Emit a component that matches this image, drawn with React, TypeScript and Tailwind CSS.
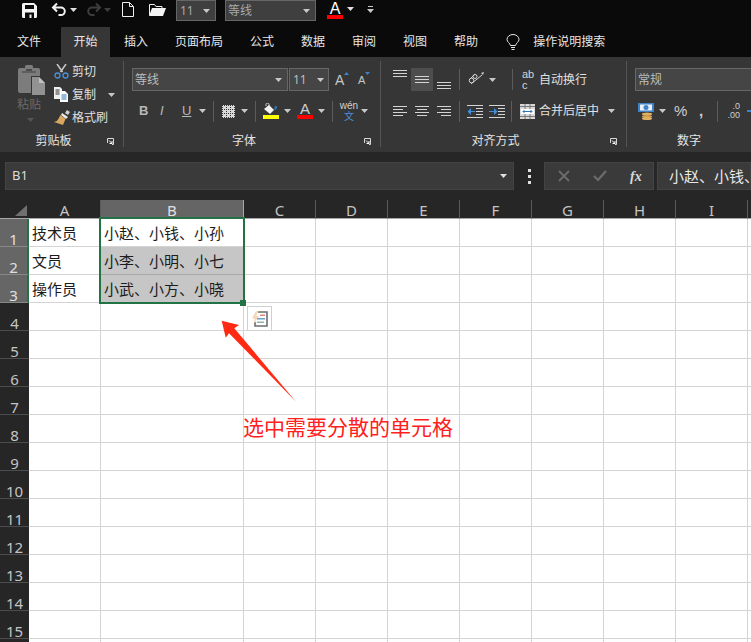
import { Fragment, type ReactNode } from 'react'

const cjk = "font-['Noto_Sans','Noto_Sans_CJK_SC',sans-serif]"

function Caret({ className = '', color = '#c8c8c8' }: { className?: string; color?: string }) {
  return (
    <svg width="7" height="4" viewBox="0 0 7 4" className={'shrink-0 ' + className}>
      <path d="M0 0h7L3.5 4z" fill={color} />
    </svg>
  )
}

function Sep({ className = '' }: { className?: string }) {
  return <div className={'w-px h-[21px] bg-[#5c5c5c] shrink-0 ' + className} />
}

function Launcher() {
  return (
    <svg width="7" height="7" viewBox="0 0 7 7" className="shrink-0">
      <path d="M.5 5V.5H6.5V6.5H5" fill="none" stroke="#d8d8d8" />
      <path d="M2 2.5L5 5.500M5 3v2.500H2.500" fill="none" stroke="#fff" />
    </svg>
  )
}

function Lines({ rows, className = '' }: { rows: number[][]; className?: string }) {
  return (
    <svg width="16" height="14" viewBox="0 0 16 14" className={'shrink-0 ' + className}>
      {rows.map((r, i) => (
        <rect key={i} x={r[0]} y={r[2]} width={r[1] - r[0]} height="1" fill="#d4d4d4" />
      ))}
    </svg>
  )
}

function SaveIcon() {
  return (
    <svg width="15" height="15" viewBox="0 0 15 15" className="shrink-0">
      <path d="M0 1.500A1.500 1.500 0 0 1 1.500 0H12l3 3v10.500a1.500 1.500 0 0 1-1.500 1.500h-12A1.500 1.500 0 0 1 0 13.500z" fill="#f4f4f4" />
      <rect x="3" y="2" width="9" height="4" fill="#0a0a0a" />
      <path d="M3 15V9.500h9V15h-2.500v-3.500h-2V15z" fill="#0a0a0a" />
    </svg>
  )
}

function UndoIcon({ color, flip = false }: { color: string; flip?: boolean }) {
  return (
    <svg width="16" height="15" viewBox="0 0 16 15" className={flip ? 'shrink-0 -scale-x-100' : 'shrink-0'}>
      <path d="M6 1.500L2 5.500l4 4M2 5.500h8a3.800 3.800 0 0 1 0 7.600H7.500" fill="none" stroke={color} strokeWidth="2" />
    </svg>
  )
}

function PasteIcon() {
  return (
    <svg width="28" height="30" viewBox="0 0 28 30" className="shrink-0">
      <path d="M1 5a2 2 0 0 1 2-2h5V1.500A1.500 1.500 0 0 1 9.500 0h5A1.500 1.500 0 0 1 16 1.500V3h5a2 2 0 0 1 2 2v6H14v17H3a2 2 0 0 1-2-2z" fill="#7c7c7c" />
      <rect x="9" y="4" width="6" height="2" fill="#4c4c4c" />
      <rect x="5" y="6" width="14" height="2" fill="#5e5e5e" />
      <path d="M15 12h7l6 6v12H15z" fill="#929292" />
      <path d="M22 12v6h6z" fill="#c0c0c0" />
    </svg>
  )
}

function CutIcon() {
  return (
    <svg width="15" height="15" viewBox="0 0 15 15" className="shrink-0">
      <path d="M3 0l5.500 8M12 0L6.500 8" stroke="#c8c8c8" strokeWidth="1.500" fill="none" />
      <circle cx="3.500" cy="11.500" r="2.500" fill="none" stroke="#4a90d9" strokeWidth="1.300" />
      <circle cx="11.500" cy="11.500" r="2.500" fill="none" stroke="#4a90d9" strokeWidth="1.300" />
    </svg>
  )
}

function CopyIcon() {
  return (
    <svg width="15" height="15" viewBox="0 0 15 15" className="shrink-0">
      <path d="M0 0h6l2 2v10H0z" fill="#f0f0f0" />
      <path d="M1.500 3h4M1.500 5h4M1.500 7h4" stroke="#333" />
      <path d="M6 4h5l3 3v8H6z" fill="#fff" />
      <path d="M7.500 8h5M7.500 10h5M7.500 12h5" stroke="#2f75b5" />
    </svg>
  )
}

function BrushIcon() {
  return (
    <svg width="16" height="15" viewBox="0 0 16 15" className="shrink-0">
      <path d="M11 3l2-3 3 2-2 3z" fill="#d0d0d0" />
      <path d="M8 3l6 4-2 2-5-4z" fill="#eaeaea" />
      <path d="M6.500 5l5 4L9 15 0 12c2-.5 3-1 4-2.500z" fill="#d9a760" />
    </svg>
  )
}

function BorderIcon() {
  return (
    <svg width="13" height="13" viewBox="0 0 13 13" className="shrink-0">
      <rect width="13" height="13" fill="#d8d8d8" />
      <path d="M.5 0v13M4.500 0v13M8.500 0v13M12.500 0v13M0 .5h13M0 4.500h13M0 8.500h13M0 12.500h13" stroke="#363636" strokeDasharray="1 1" />
    </svg>
  )
}

function FillIcon() {
  return (
    <div className="flex flex-col items-center w-[16px] shrink-0">
      <svg width="16" height="12" viewBox="0 0 16 12">
        <path d="M3 3V1.500a1.500 1.500 0 0 1 3 0V3" fill="none" stroke="#d0d0d0" />
        <path d="M1 6l5-4 5 5-4 4z" fill="#f2f2f2" />
        <path d="M11.500 7V4.500C11.500 3 13.500 2 14 3.500c.5 1.500-1 2.500-1.500 3.500z" fill="#2f75b5" />
      </svg>
      <div className="w-[16px] h-[4px] bg-[#ffff00]" />
    </div>
  )
}

function FontColor({ textSize = 'text-[15px] text-[#d0d0d0]' }: { textSize?: string }) {
  return (
    <div className="flex flex-col items-center w-[16px] shrink-0">
      <span className={textSize + " leading-[12px] h-[12px] font-['Liberation_Sans',sans-serif]"}>A</span>
      <div className="w-[16px] h-[4px] bg-[#ff0000]" />
    </div>
  )
}

function OrientIcon() {
  return (
    <svg width="17" height="15" viewBox="0 0 17 15" className="shrink-0">
      <path d="M1 8l6-6M3 12l11-9" stroke="#d4d4d4" fill="none" />
      <path d="M13 1l3-1-1 3z" fill="#d4d4d4" />
      <circle cx="3.500" cy="8.500" r="2.300" fill="none" stroke="#d4d4d4" />
      <circle cx="7" cy="4.500" r="2" fill="none" stroke="#d4d4d4" />
    </svg>
  )
}

function IndentIcon({ right = false }: { right?: boolean }) {
  return (
    <svg width="16" height="13" viewBox="0 0 16 13" className="shrink-0">
      {[0, 12].map((y) => (
        <rect key={y} x="0" y={y} width="16" height="1" fill="#d4d4d4" />
      ))}
      {[3, 6, 9].map((y) => (
        <rect key={y} x="9" y={y} width="7" height="1" fill="#d4d4d4" />
      ))}
      {right ? (
        <path d="M0 6h5V3l3.500 3.500L5 10V7H0z" fill="#3f8fdc" />
      ) : (
        <path d="M8 6H4V3L.5 6.500 4 10V7h4z" fill="#3f8fdc" />
      )}
    </svg>
  )
}

function MergeIcon() {
  return (
    <svg width="15" height="15" viewBox="0 0 15 15" className="shrink-0">
      <rect width="15" height="15" fill="#d8d8d8" />
      <rect x="1" y="5" width="13" height="5" fill="#fff" />
      <path d="M0 2.500h15M0 12.500h15M5 0v5M10 0v5M5 10v5M10 10v5" stroke="#777" />
      <path d="M3 7.500h9M4.500 6L3 7.500 4.500 9M10.500 6L12 7.500 10.500 9" stroke="#2f75b5" fill="none" />
    </svg>
  )
}

function CurrencyIcon() {
  return (
    <svg width="16" height="17" viewBox="0 0 16 17" className="shrink-0">
      <rect width="16" height="9" fill="#3f82c9" />
      <rect x="2" y="1.500" width="12" height="6" fill="#e8f0f8" />
      <circle cx="8" cy="4.500" r="2.500" fill="#3f82c9" />
      <ellipse cx="9" cy="11" rx="5" ry="1.500" fill="#e0b060" />
      <ellipse cx="9" cy="13.500" rx="5" ry="1.500" fill="#d4a050" />
      <ellipse cx="9" cy="15.500" rx="5" ry="1.500" fill="#e0b060" />
    </svg>
  )
}

function FlashIcon() {
  return (
    <svg width="16" height="16" viewBox="0 0 16 16">
      <path d="M6 1h9v14H3v-4" fill="none" stroke="#6e6e6e" strokeWidth="1.600" />
      <path d="M4 0L0 7.500h2.800L1.500 13 7 5H4.200L6.500 0z" fill="#f3d9b5" />
      <rect x="8" y="3.500" width="5" height="1.500" fill="#d98880" />
      <rect x="5" y="7" width="8" height="1.500" fill="#6c9ec9" />
      <rect x="5" y="10.500" width="7" height="1.500" fill="#8fb5a8" />
    </svg>
  )
}

const tabs = ['插入', '页面布局', '公式', '数据', '审阅', '视图', '帮助']

function Group({ width, label, children }: { width: string; label: string; children: ReactNode }) {
  return (
    <div className={width + ' h-[86px] shrink-0 flex flex-col border-r border-[#555555]'}>
      <div className="h-[74px] min-h-0">{children}</div>
      <div className="h-[12px] flex items-center">
        <span className="flex-1 text-center text-[12px] leading-[14px] text-[#e4e4e4]">{label}</span>
        <div className="w-[16px] flex"><Launcher /></div>
      </div>
    </div>
  )
}

function ClipboardGroup() {
  return (
    <Group width="w-[124px]" label="剪贴板">
      <div className="flex">
        <div className="w-[54px] pl-[17px] pt-[4px] flex flex-col shrink-0">
          <PasteIcon />
          <span className="mt-[3px] text-[12px] leading-[14px] text-[#6a6a6a]">粘贴</span>
          <Caret className="mt-[6px] ml-[10px]" color="#555555" />
        </div>
        <div className="-mt-[1px] flex flex-col text-[12px] text-[#e0e0e0]">
          <div className="h-[23px] flex items-center gap-[3px]"><CutIcon /><span>剪切</span></div>
          <div className="h-[23px] flex items-center gap-[3px]"><CopyIcon /><span>复制</span><Caret className="ml-[9px]" /></div>
          <div className="h-[23px] flex items-center gap-[2px]"><BrushIcon /><span>格式刷</span></div>
        </div>
      </div>
    </Group>
  )
}

function FontGroup() {
  return (
    <Group width="w-[257px]" label="字体">
      <div className="pl-[8px] pt-[7px] h-[23px] box-content flex items-center">
        <div className="w-[156px] h-[23px] bg-[#454545] border border-[#666666] flex items-center justify-between pl-[2px] pr-[5px]">
          <span className="text-[12px] text-[#bcbcbc]">等线</span>
          <Caret />
        </div>
        <div className="ml-px w-[40px] h-[23px] bg-[#454545] border border-[#666666] flex items-center justify-between pl-[3px] pr-[4px]">
          <span className="text-[12px] text-[#bcbcbc]">11</span>
          <Caret />
        </div>
        <div className="ml-[6px] w-[14px] flex items-start text-[14px] leading-[16px] text-[#c8c8c8] font-['Liberation_Sans',sans-serif]">A<svg width="5" height="3" className="shrink-0"><path d="M0 3L2.500 0 5 3z" fill="#3f82c9" /></svg></div>
        <div className="ml-[9px] w-[14px] flex items-start text-[11px] leading-[16px] text-[#c8c8c8] font-['Liberation_Sans',sans-serif]">A<svg width="5" height="3" className="shrink-0"><path d="M0 0L2.500 3 5 0z" fill="#3f82c9" /></svg></div>
      </div>
      <div className="mt-[8px] h-[24px] flex items-center pl-[15px] font-['Liberation_Sans',sans-serif] text-[#b8b8b8]">
        <span className="w-[8px] text-[13px] font-bold">B</span>
        <span className="ml-[13px] w-[8px] text-[13px] italic">I</span>
        <span className="ml-[14px] w-[9px] text-[13px] underline">U</span>
        <Caret className="ml-[8px]" />
        <Sep className="ml-[7px]" />
        <div className="ml-[8px]"><BorderIcon /></div>
        <Caret className="ml-[6px]" />
        <Sep className="ml-[7px]" />
        <div className="ml-[7px]"><FillIcon /></div>
        <Caret className="ml-[5px]" />
        <div className="ml-[6px]"><FontColor /></div>
        <Caret className="ml-[5px]" />
        <Sep className="ml-[7px]" />
        <div className="ml-[8px] w-[16px] flex flex-col items-center text-[10px] leading-[11px]">
          <span className="text-[#d0d0d0]">wén</span>
          <span className={'text-[#4a90d9] ' + cjk}>文</span>
        </div>
        <Caret className="ml-[4px]" />
      </div>
    </Group>
  )
}

function AlignGroup() {
  return (
    <Group width="w-[246px]" label="对齐方式">
      <div className="pt-[7px] flex flex-col">
        <div className="h-[23px] flex items-center pl-[12px]">
          <Lines rows={[[0, 14, 0], [0, 14, 3], [0, 14, 6]]} className="-mt-[5px]" />
          <div className="ml-[2px] w-[22px] h-[23px] bg-[#4e4e4e] flex items-center justify-center"><Lines rows={[[1, 15, 3], [1, 15, 6], [1, 15, 9]]} /></div>
          <Lines rows={[[0, 14, 7], [0, 14, 10], [0, 14, 13]]} className="ml-[4px] mt-[4px]" />
          <Sep className="ml-[6px]" />
          <div className="ml-[8px]"><OrientIcon /></div>
          <Caret className="ml-[4px]" />
          <Sep className="ml-[16px]" />
          <div className="ml-[9px] w-[13px] text-[11px] leading-[11px] text-[#d4d4d4] font-['Liberation_Sans',sans-serif]">ab<br />c</div>
          <span className="ml-[4px] text-[12px] text-[#e0e0e0]">自动换行</span>
        </div>
        <div className="mt-[8px] h-[24px] flex items-center pl-[12px]">
          <Lines rows={[[0, 14, 2], [0, 10, 5], [0, 14, 8], [0, 10, 11]]} />
          <Lines rows={[[0, 14, 2], [2, 12, 5], [0, 14, 8], [2, 12, 11]]} className="ml-[6px]" />
          <Lines rows={[[0, 14, 2], [4, 14, 5], [0, 14, 8], [4, 14, 11]]} className="ml-[6px]" />
          <Sep className="ml-[6px]" />
          <div className="ml-[7px]"><IndentIcon /></div>
          <div className="ml-[6px]"><IndentIcon right /></div>
          <Sep className="ml-[6px]" />
          <div className="ml-[8px]"><MergeIcon /></div>
          <span className="ml-[4px] text-[12px] text-[#e0e0e0]">合并后居中</span>
          <Caret className="ml-[9px]" />
        </div>
      </div>
    </Group>
  )
}

function NumberGroup() {
  return (
    <div className="flex-1 min-w-0 h-[86px] flex flex-col">
      <div className="h-[74px] pl-[8px] pt-[7px]">
        <div className="h-[23px] bg-[#454545] border border-[#666666] border-r-0 flex items-center pl-[2px] text-[12px] text-[#bcbcbc]">常规</div>
        <div className="mt-[8px] h-[24px] flex items-center pl-[3px] text-[#d0d0d0]">
          <CurrencyIcon />
          <Caret className="ml-[5px]" />
          <span className="ml-[8px] w-[14px] text-[15px] font-['Liberation_Sans',sans-serif]">%</span>
          <span className="ml-[11px] w-[5px] text-[15px] font-bold font-['Liberation_Sans',sans-serif]">,</span>
          <Sep className="ml-[13px]" />
          <div className="ml-[7px] w-[15px] text-[9px] leading-[9px] text-right font-['Liberation_Sans',sans-serif]">.0<br />.00</div>
          <div className="ml-[7px] w-[4px] h-[2px] bg-[#3f82c9]" />
        </div>
      </div>
      <div className="h-[12px] flex items-center">
        <span className="w-[130px] text-center text-[12px] leading-[14px] text-[#e4e4e4]">数字</span>
      </div>
    </div>
  )
}

const colLabels = ['A', 'B', 'C', 'D', 'E', 'F', 'G', 'H', 'I', 'J']
const data: Record<string, string> = {
  A1: '技术员',
  B1: '小赵、小钱、小孙',
  A2: '文员',
  B2: '小李、小明、小七',
  A3: '操作员',
  B3: '小武、小方、小晓',
}
const rowNums = Array.from({ length: 16 }, (_, i) => i + 1)

function Sheet() {
  return (
    <div className="grid grid-cols-[29px_72px_143px_repeat(7,72px)_72px] auto-rows-[28px] grid-rows-[19px] text-[15px]">
      <div className="h-[19px] bg-[#262626] border-b border-[#a8a8a8] flex items-start justify-end pt-[5px] pr-[2px]">
        <svg width="12" height="11" viewBox="0 0 12 11"><path d="M12 0v11H0z" fill="#707070" /></svg>
      </div>
      {colLabels.map((c) => (
        <div
          key={c}
          className={
            'h-[19px] flex items-end justify-center border-b border-[#a8a8a8] border-r text-[15px] leading-[16px] text-[#c4c4c4] ' +
            (c === 'B' ? 'bg-[#656565] border-r-[#a8a8a8] text-[#e0e0e0]' : 'bg-[#262626] border-r-[#5a5a5a]')
          }
        >
          {c === 'J' ? '' : c}
        </div>
      ))}
      {rowNums.map((n) => (
        <Fragment key={n}>
          <div
            className={
              'flex items-end justify-center border-b text-[15px] leading-[13px] ' +
              (n <= 3 ? 'bg-[#666666] border-[#888888] border-r-2 border-r-[#217346] text-[#e0e0e0]' : 'bg-[#262626] border-[#4c4c4c] text-[#c4c4c4]')
            }
          >
            {n < 16 ? n : ''}
          </div>
          {colLabels.map((c) => {
            const key = c + n
            const picked = key === 'B2' || key === 'B3'
            return (
              <div
                key={key}
                className={'flex items-center pl-[3px] pt-[1px] whitespace-nowrap border-r border-b text-[#1c1c1c] ' + (picked ? 'bg-[#c6c6c6] border-[#a8a8a8]' : 'bg-white border-[#d4d4d4]')}
              >
                {data[key]}
              </div>
            )
          })}
        </Fragment>
      ))}
    </div>
  )
}

export default function App() {
  return (
    <div className={'relative w-[751px] h-[642px] overflow-hidden bg-[#262626] ' + cjk}>
      <div className="h-[27px] bg-[#0a0a0a] flex items-start">
        <div className="ml-[22px] mt-[3px]"><SaveIcon /></div>
        <div className="ml-[14px] mt-[2px]"><UndoIcon color="#f2f2f2" /></div>
        <Caret className="ml-[3px] mt-[8px]" color="#e0e0e0" />
        <div className="ml-[9px] mt-[2px]"><UndoIcon color="#3e3e3e" flip /></div>
        <Caret className="ml-[2px] mt-[8px]" color="#3e3e3e" />
        <svg width="12" height="15" viewBox="0 0 12 15" className="ml-[11px] mt-[2px] shrink-0">
          <path d="M.5.500h7l4 4v10H.5z" fill="none" stroke="#f0f0f0" />
          <path d="M7.500.500v4h4" fill="none" stroke="#f0f0f0" />
        </svg>
        <svg width="17" height="14" viewBox="0 0 17 14" className="ml-[15px] mt-[2px] shrink-0">
          <path d="M.5 13V2.500h5l1.500 2h6V6" fill="none" stroke="#f0f0f0" />
          <path d="M0 14l3-8h14l-3 8z" fill="#f4f4f4" />
        </svg>
        <div className="ml-[10px] w-[40px] h-[21px] bg-[#3f3f3f] border border-[#666666] flex items-center justify-between pl-[3px] pr-[5px]">
          <span className="text-[12px] text-[#a8a8a8]">11</span>
          <Caret />
        </div>
        <div className="ml-[9px] w-[91px] h-[21px] bg-[#3f3f3f] border border-[#666666] flex items-center justify-between pl-[2px] pr-[5px]">
          <span className="text-[12px] text-[#a8a8a8]">等线</span>
          <Caret />
        </div>
        <div className="ml-[11px] mt-[3px]"><FontColor textSize="text-[16px] text-white" /></div>
        <Caret className="ml-[4px] mt-[7px]" color="#e0e0e0" />
        <div className="ml-[13px] mt-[6px] flex flex-col items-center gap-[2px]">
          <div className="w-[5px] h-px bg-[#c8c8c8]" />
          <Caret color="#c8c8c8" />
        </div>
      </div>

      <div className="h-[30px] bg-[#0a0a0a] flex items-stretch text-[12px] text-[#e6e6e6]">
        <span className="ml-[17px] self-center">文件</span>
        <span className="ml-[20px] w-[49px] bg-[#363636] flex items-center justify-center">开始</span>
        <div className="ml-[14px] flex items-center gap-[27px]">
          {tabs.map((t) => (
            <span key={t}>{t}</span>
          ))}
        </div>
        <svg width="14" height="17" viewBox="0 0 14 17" className="ml-[28px] self-center shrink-0">
          <path d="M4.500 11.500C4 9 1 8 1 5.500a6 5 0 0 1 12 0c0 2.500-3 3.500-3.500 6z" fill="none" stroke="#e6e6e6" />
          <path d="M5 13.500h4M5.500 15.500h3" stroke="#e6e6e6" />
        </svg>
        <span className="ml-[13px] self-center">操作说明搜索</span>
      </div>

      <div className="h-[95px] bg-[#363636] pt-[4px] flex items-start">
        <ClipboardGroup />
        <FontGroup />
        <AlignGroup />
        <NumberGroup />
      </div>

      <div className="h-[48px] pt-[10px] flex items-start">
        <div className="ml-[5px] w-[509px] h-[28px] bg-[#3a3a3a] border border-[#444444] flex items-center justify-between pl-[6px] pr-[6px]">
          <span className="text-[13px] text-[#dcdcdc]">B1</span>
          <Caret color="#e0e0e0" />
        </div>
        <div className="ml-[14px] w-[3px] h-[28px] flex flex-col items-center justify-center gap-[3px]">
          <div className="w-[3px] h-[3px] bg-[#e0e0e0]" />
          <div className="w-[3px] h-[3px] bg-[#e0e0e0]" />
          <div className="w-[3px] h-[3px] bg-[#e0e0e0]" />
        </div>
        <div className="ml-[13px] w-[110px] h-[28px] bg-[#3a3a3a] border border-[#444444] flex items-center pl-[13px]">
          <svg width="12" height="12" viewBox="0 0 12 12"><path d="M1 1l10 10M11 1L1 11" stroke="#6c6c6c" strokeWidth="1.800" /></svg>
          <svg width="14" height="12" viewBox="0 0 14 12" className="ml-[23px]"><path d="M1 6l4 4 8-9" fill="none" stroke="#6c6c6c" strokeWidth="2.200" /></svg>
          <span className="ml-[23px] text-[14px] italic font-bold text-[#d8d8d8] font-['Liberation_Serif',serif]">fx</span>
        </div>
        <div className="ml-[3px] flex-1 min-w-0 h-[28px] bg-[#3a3a3a] border border-[#444444] flex items-center pl-[11px] text-[15px] text-[#e8e8e8] whitespace-nowrap overflow-hidden">小赵、小钱、小孙</div>
      </div>

      <Sheet />

      <div className="absolute left-[99px] top-[217px] w-[146px] h-[87px] border-2 border-[#217346]" />
      <div className="absolute left-[240px] top-[300px] w-[6px] h-[6px] bg-[#217346]" />
      <div className="absolute left-[247px] top-[306px] w-[25px] h-[25px] bg-white border border-[#d0d0d0] flex items-center justify-center">
        <FlashIcon />
      </div>
      <svg width="751" height="642" viewBox="0 0 751 642" className="absolute left-0 top-0 pointer-events-none">
        <polygon points="221.700,320.700 239,325 234.300,328.300 296,401.700 229,333.300 225.700,337.700" fill="#ff2a14" />
      </svg>
      <div className="absolute left-[243px] top-[412px] text-[21px] leading-[30px] text-[#ff2020] whitespace-nowrap">选中需要分散的单元格</div>
    </div>
  )
}
